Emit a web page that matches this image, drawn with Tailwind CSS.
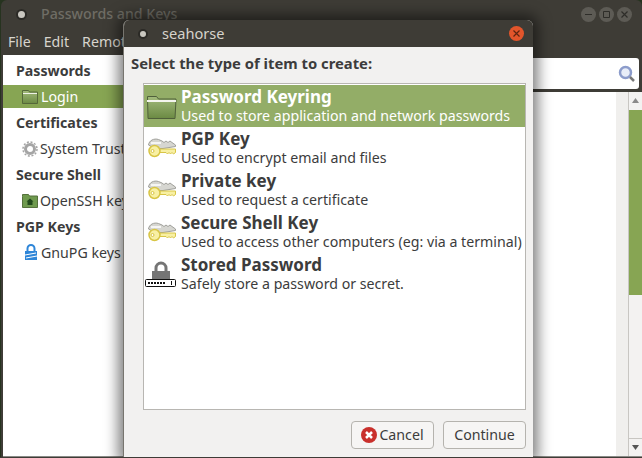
<!DOCTYPE html>
<html>
<head>
    <title>Passwords and Keys</title>
    <script src="https://cdn.jsdelivr.net/npm/@tailwindcss/browser@4"></script>
</head>
<body class="bg-[#26331f] overflow-hidden">
    <div class="relative w-[642px] h-[458px] overflow-hidden font-['Noto_Sans','Open_Sans',sans-serif] text-[14.2px] text-[#3c3c3c]">

        <!-- shared svg gradients -->
        <svg class="absolute" width="0" height="0">
            <defs>
                <linearGradient id="folder" x1="0" y1="0" x2="0" y2="1">
                    <stop offset="0" stop-color="#a3bb7c"/>
                    <stop offset="1" stop-color="#6b8a43"/>
                </linearGradient>
                <g id="keys">
                    <path d="M1.500 8C2 3.500 7 1 11.500 2.500L15 4l2 1.500L19 4l2 1.500L23 4l2 1.500 3.500 2.500v1.500L16 11.500H8z" fill="#d6d6d1" stroke="#a0a09b"/>
                    <path d="M4 6h10" stroke="#fff" stroke-width="1.500"/>
                    <path d="M12 12h16.500v3.500l-2 1.500-1.500-1.500-1.500 1.500-1.500-1.500-1.500 1.500-1.500-1.500H12z" fill="#f8f0a4" stroke="#d8c545"/>
                    <circle cx="7.500" cy="14" r="5.500" fill="#f8f0a4" stroke="#d8c545" stroke-width="1.500"/>
                    <circle cx="5.500" cy="14" r="1.500" fill="#fff" stroke="#d8c545"/>
                </g>
            </defs>
        </svg>

        <!-- main window -->
        <div class="absolute left-[1px] top-0 w-[641px] h-[458px] flex flex-col rounded-t-[6px] bg-[#3e3c36] overflow-hidden">
            <div class="h-[28px] shrink-0 flex items-center pl-[15px] pr-[10px]">
                <span class="w-[11px] h-[11px] rounded-full bg-[#c9c7c0] border-2 border-[#2b2a26]"></span>
                <span class="ml-[14px] text-[#6f6d65] font-medium">Passwords and Keys</span>
                <div class="ml-auto flex gap-[3px]">
                    <span class="w-[15px] h-[15px] rounded-full bg-[#5d5b55] flex items-center justify-center">
                        <svg width="9" height="9" viewBox="0 0 9 9"><path d="M1 4.500h7" stroke="#2e2d29" stroke-width="1"/></svg>
                    </span>
                    <span class="w-[15px] h-[15px] rounded-full bg-[#5d5b55] flex items-center justify-center">
                        <svg width="9" height="9" viewBox="0 0 9 9"><path d="M1.500 1.500h6v6h-6z" fill="none" stroke="#2e2d29"/></svg>
                    </span>
                    <span class="w-[15px] h-[15px] rounded-full bg-[#5d5b55] flex items-center justify-center">
                        <svg width="9" height="9" viewBox="0 0 9 9"><path d="M1.500 1.500l6 6M7.500 1.500l-6 6" stroke="#2e2d29" stroke-width="1.200"/></svg>
                    </span>
                </div>
            </div>
            <div class="h-[27px] shrink-0 flex items-center gap-[13px] pl-[7px] text-[#d8d5cd]">
                <span>File</span><span>Edit</span><span>Remote</span>
            </div>
            <div class="flex flex-1 min-h-0 pl-[2px] pb-px">
                <div class="w-full flex bg-white border-b border-[#8a8a86]">
                    <!-- sidebar -->
                    <div class="w-[120px] shrink-0 pt-[4px] overflow-hidden whitespace-nowrap">
                        <div class="h-[26px] pl-[13px] pb-[3px] flex items-center font-bold">Passwords</div>
                        <div class="h-[23px] pl-[19px] flex items-center gap-[3px] bg-[#87a553] text-white">
                            <svg class="shrink-0" width="16" height="14" viewBox="0 0 16 14"><path d="M.5 2.500v-2h6l1 1.500h8v11.500h-15z" fill="url(#folder)" stroke="#55683a"/><path d="M1 3h14v1H1z" fill="#eef2e6"/></svg>
                            <span>Login</span>
                        </div>
                        <div class="h-[29px] pl-[13px] flex items-center font-bold">Certificates</div>
                        <div class="h-[23px] pl-[19px] flex items-center gap-[2px]">
                            <svg class="shrink-0" width="16" height="16" viewBox="0 0 16 16"><circle cx="8" cy="8" r="4.500" fill="none" stroke="#a5a5a5" stroke-width="3"/><circle cx="8" cy="8" r="7" fill="none" stroke="#a5a5a5" stroke-width="1.500" stroke-dasharray="2 1.700"/></svg>
                            <span>System Trust</span>
                        </div>
                        <div class="h-[29px] pl-[13px] flex items-center font-bold">Secure Shell</div>
                        <div class="h-[23px] pl-[19px] flex items-center gap-[2px]">
                            <svg class="shrink-0" width="16" height="14" viewBox="0 0 16 14"><path d="M.5 2.500v-2h6l1 1.500h8v11.500h-15z" fill="#6f9a4e" stroke="#55713c"/><path d="M8 4.500l3.500 3h-1V11h-5V7.500h-1z" fill="#234a1c"/></svg>
                            <span>OpenSSH keys</span>
                        </div>
                        <div class="h-[29px] pl-[13px] flex items-center font-bold">PGP Keys</div>
                        <div class="h-[23px] pl-[21px] flex items-center gap-[3px]">
                            <svg class="shrink-0" width="14" height="17" viewBox="0 0 14 17"><path d="M3.500 7V4.500a3.500 3.500 0 0 1 7 0V7" fill="none" stroke="#2f86d8" stroke-width="2"/><path d="M1 7h12v9H1z" fill="#2f86d8"/><path d="M1 11l11-2M2 14l11-2" stroke="#fff"/></svg>
                            <span>GnuPG keys</span>
                        </div>
                    </div>
                    <!-- content behind the dialog -->
                    <div class="flex-1 flex flex-col min-w-0">
                        <div class="h-[37px] shrink-0 bg-[#3e3c36] pt-[3px] pb-[3px] pr-[3px]">
                            <div class="h-full bg-white rounded-r-[3px] flex items-center justify-end pr-[4px]">
                                <svg width="17" height="18" viewBox="0 0 17 18"><circle cx="7.500" cy="7.500" r="5.500" fill="#e8edf8" stroke="#8c9ccb" stroke-width="2.500"/><path d="M12 12l4 4" stroke="#777" stroke-width="2.500"/></svg>
                            </div>
                        </div>
                        <div class="flex-1 flex justify-end">
                            <div class="w-[12px] bg-[#f0efed]"></div>
                            <div class="w-[14px] bg-[#f3f2f1] border-l border-[#c8c6c2] flex flex-col items-center">
                                <svg class="mt-[6px]" width="7" height="5" viewBox="0 0 7 5"><path d="M0 5l3.500-5L7 5z" fill="#8a8a8a"/></svg>
                                <div class="w-full h-[185px] mt-[7px] bg-[#87a553]"></div>
                                <div class="flex-1"></div>
                                <div class="w-full border-t border-[#c8c6c2] flex justify-center pt-[6px] pb-[6px]">
                                    <svg width="7" height="5" viewBox="0 0 7 5"><path d="M0 0l3.500 5L7 0z" fill="#555"/></svg>
                                </div>
                            </div>
                        </div>
                    </div>
                </div>
            </div>
        </div>

        <!-- dialog -->
        <div class="absolute left-[123px] top-[20px] w-[410px] h-[438px] flex flex-col rounded-t-[6px] bg-[#f2f1f0] border-l border-[#77756f] shadow-[0_0_14px_5px_rgba(0,0,0,0.5)] overflow-hidden">
            <div class="h-[27px] shrink-0 bg-[#3e3c36] flex items-center pl-[14px] pr-[9px] text-[#d6d3cb]">
                <span class="w-[10px] h-[10px] rounded-full bg-[#c9c7c0] border-2 border-[#2b2a26]"></span>
                <span class="ml-[14px] text-[14.600px]">seahorse</span>
                <span class="ml-auto w-[15px] h-[15px] rounded-full bg-[#e2552b] flex items-center justify-center">
                    <svg width="9" height="9" viewBox="0 0 9 9"><path d="M1.500 1.500l6 6M7.500 1.500l-6 6" stroke="#5e2410" stroke-width="1.200"/></svg>
                </span>
            </div>
            <div class="h-[36px] shrink-0 pl-[7px] pb-[4px] flex items-center font-bold text-[14.800px]">Select the type of item to create:</div>
            <div class="ml-[19px] mr-[7px] h-[327px] shrink-0 bg-white border border-[#b8b6b2] pt-px whitespace-nowrap">
                <div class="h-[42px] flex items-center bg-[#93ad67] text-white">
                    <svg class="ml-[1px] shrink-0" width="32" height="26" viewBox="0 0 32 26"><path d="M2.500 3.500h9l2 2.500h17.500l-1 19.500h-27z" fill="url(#folder)" stroke="#4f5f3a"/><path d="M2 7h29v2H2z" fill="#f4f5ee"/></svg>
                    <div class="ml-[4px] leading-[19px]"><div class="font-bold text-[17px]">Password Keyring</div><div>Used to store application and network passwords</div></div>
                </div>
                <div class="h-[42px] flex items-center">
                    <svg class="ml-[3px] shrink-0" width="30" height="22" viewBox="0 0 30 22"><use href="#keys"/></svg>
                    <div class="ml-[4px] leading-[19px]"><div class="font-bold text-[17px]">PGP Key</div><div>Used to encrypt email and files</div></div>
                </div>
                <div class="h-[42px] flex items-center">
                    <svg class="ml-[3px] shrink-0" width="30" height="22" viewBox="0 0 30 22"><use href="#keys"/></svg>
                    <div class="ml-[4px] leading-[19px]"><div class="font-bold text-[17px]">Private key</div><div>Used to request a certificate</div></div>
                </div>
                <div class="h-[42px] flex items-center">
                    <svg class="ml-[3px] shrink-0" width="30" height="22" viewBox="0 0 30 22"><use href="#keys"/></svg>
                    <div class="ml-[4px] leading-[19px]"><div class="font-bold text-[17px]">Secure Shell Key</div><div>Used to access other computers (eg: via a terminal)</div></div>
                </div>
                <div class="h-[42px] flex items-center">
                    <svg class="ml-[1px] shrink-0" width="32" height="30" viewBox="0 0 32 30"><path d="M11 13V9a5 5 0 0 1 10 0v4" fill="none" stroke="#757575" stroke-width="3"/><path d="M7 12h18v9H7z" fill="#757575"/><rect x=".5" y="20.500" width="30" height="7" rx="1" fill="#fff" stroke="#111"/><path d="M3 24h17" stroke="#111" stroke-width="2" stroke-dasharray="2 1"/><path d="M26.500 22v4" stroke="#111"/></svg>
                    <div class="ml-[4px] leading-[19px]"><div class="font-bold text-[17px]">Stored Password</div><div>Safely store a password or secret.</div></div>
                </div>
            </div>
            <div class="flex justify-end gap-[9px] mr-[7px] mt-[11px]">
                <button class="w-[83px] h-[28px] flex items-center justify-center gap-[2px] rounded-[4px] border border-[#b5b3ae] bg-[#f6f5f4]">
                    <svg width="16" height="16" viewBox="0 0 16 16"><circle cx="8" cy="8" r="8" fill="#c9302c"/><path d="M5 5l6 6M11 5l-6 6" stroke="#fff" stroke-width="2.500"/></svg>
                    <span>Cancel</span>
                </button>
                <button class="w-[83px] h-[28px] rounded-[4px] border border-[#b5b3ae] bg-[#f6f5f4]">Continue</button>
            </div>
        </div>

        <!-- window frame line along the bottom -->
        <div class="absolute left-0 right-0 bottom-0 h-px bg-[#3e3c36]"></div>
    </div>
</body>
</html>
